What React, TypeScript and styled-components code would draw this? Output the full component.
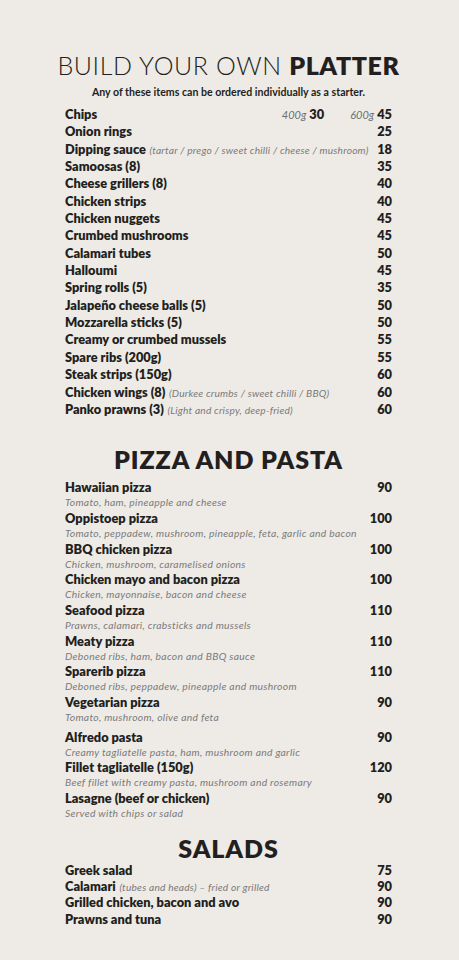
import React from 'react'
import styled, { createGlobalStyle } from 'styled-components'

const GlobalStyle = createGlobalStyle`
  html, body {
    margin: 0;
    padding: 0;
    background: #eeebe6;
  }
  body {
    font-family: Lato, 'Open Sans', sans-serif;
    color: #231f20;
  }
`

const Page = styled.div`
  width: 459px;
  min-height: 960px;
  box-sizing: border-box;
  padding: 50px 67px 0 65px;
  display: flex;
  flex-direction: column;
`

const Title = styled.h1<{ $light?: boolean }>`
  margin: 0 -40px;
  text-align: center;
  font-size: 25px;
  line-height: 30px;
  letter-spacing: ${(p) => (p.$light ? 0.6 : 0.9)}px;
  font-weight: ${(p) => (p.$light ? 300 : 800)};
  white-space: nowrap;

  b {
    font-weight: 800;
  }
`

const Intro = styled.p`
  margin: 6px 0 8px;
  text-align: center;
  font-size: 10.6px;
  font-weight: 700;
`

const List = styled.div<{ $pitch: number; $top?: number }>`
  display: flex;
  flex-direction: column;
  margin-top: ${(p) => p.$top ?? 0}px;

  > div {
    height: ${(p) => p.$pitch}px;
  }
`

const Row = styled.div`
  display: flex;
  align-items: baseline;
  justify-content: space-between;
  gap: 8px;
  font-size: 12.8px;
  line-height: 17px;
  font-weight: 800;
`

const Name = styled.span`
  white-space: nowrap;

  i {
    font-weight: 400;
    font-size: 10.2px;
    letter-spacing: 0.2px;
    color: #7a7a7a;
    margin-left: 1px;
  }
`

const Prices = styled.span`
  display: flex;
  gap: 26px;

  i {
    font-weight: 400;
    font-size: 11px;
    color: #6e6e6e;
    margin-right: 3px;
  }
`

const Dish = styled.div<{ $gap?: boolean }>`
  display: flex;
  flex-direction: column;
  margin-top: ${(p) => (p.$gap ? 4 : 0)}px;
`

const Desc = styled.div`
  font-size: 10.3px;
  line-height: 12px;
  letter-spacing: 0.3px;
  font-style: italic;
  color: #7a7a7a;
  white-space: nowrap;
`

const Section = styled.section<{ $top: number }>`
  margin-top: ${(p) => p.$top}px;
  display: flex;
  flex-direction: column;
`

const platter: [string, string?, string?][] = [
  ['Onion rings', undefined, '25'],
  ['Dipping sauce', '(tartar / prego / sweet chilli / cheese / mushroom)', '18'],
  ['Samoosas (8)', undefined, '35'],
  ['Cheese grillers (8)', undefined, '40'],
  ['Chicken strips', undefined, '40'],
  ['Chicken nuggets', undefined, '45'],
  ['Crumbed mushrooms', undefined, '45'],
  ['Calamari tubes', undefined, '50'],
  ['Halloumi', undefined, '45'],
  ['Spring rolls (5)', undefined, '35'],
  ['Jalapeño cheese balls (5)', undefined, '50'],
  ['Mozzarella sticks (5)', undefined, '50'],
  ['Creamy or crumbed mussels', undefined, '55'],
  ['Spare ribs (200g)', undefined, '55'],
  ['Steak strips (150g)', undefined, '60'],
  ['Chicken wings (8)', '(Durkee crumbs / sweet chilli / BBQ)', '60'],
  ['Panko prawns (3)', '(Light and crispy, deep-fried)', '60'],
]

const pizzas = [
  { name: 'Hawaiian pizza', desc: 'Tomato, ham, pineapple and cheese', price: '90' },
  { name: 'Oppistoep pizza', desc: 'Tomato, peppadew, mushroom, pineapple, feta, garlic and bacon', price: '100' },
  { name: 'BBQ chicken pizza', desc: 'Chicken, mushroom, caramelised onions', price: '100' },
  { name: 'Chicken mayo and bacon pizza', desc: 'Chicken, mayonnaise, bacon and cheese', price: '100' },
  { name: 'Seafood pizza', desc: 'Prawns, calamari, crabsticks and mussels', price: '110' },
  { name: 'Meaty pizza', desc: 'Deboned ribs, ham, bacon and BBQ sauce', price: '110' },
  { name: 'Sparerib pizza', desc: 'Deboned ribs, peppadew, pineapple and mushroom', price: '110' },
  { name: 'Vegetarian pizza', desc: 'Tomato, mushroom, olive and feta', price: '90' },
  { name: 'Alfredo pasta', desc: 'Creamy tagliatelle pasta, ham, mushroom and garlic', price: '90', gap: true },
  { name: 'Fillet tagliatelle (150g)', desc: 'Beef fillet with creamy pasta, mushroom and rosemary', price: '120' },
  { name: 'Lasagne (beef or chicken)', desc: 'Served with chips or salad', price: '90' },
]

const salads: [string, string?, string?][] = [
  ['Greek salad', undefined, '75'],
  ['Calamari', '(tubes and heads) – fried or grilled', '90'],
  ['Grilled chicken, bacon and avo', undefined, '90'],
  ['Prawns and tuna', undefined, '90'],
]

export default function App() {
  return (
    <Page>
      <GlobalStyle />
      <Title $light>
        BUILD YOUR OWN <b>PLATTER</b>
      </Title>
      <Intro>Any of these items can be ordered individually as a starter.</Intro>
      <List $pitch={17.35}>
        <Row>
          <Name>Chips</Name>
          <Prices>
            <span>
              <i>400g</i>30
            </span>
            <span>
              <i>600g</i>45
            </span>
          </Prices>
        </Row>
        {platter.map(([name, note, price]) => (
          <Row key={name}>
            <Name>
              {name}
              {note && <i> {note}</i>}
            </Name>
            <span>{price}</span>
          </Row>
        ))}
      </List>

      <Section $top={26}>
        <Title>PIZZA AND PASTA</Title>
        <List $pitch={30.7} $top={5}>
          {pizzas.map((p) => (
            <Dish key={p.name} $gap={p.gap}>
              <Row>
                <Name>{p.name}</Name>
                <span>{p.price}</span>
              </Row>
              <Desc>{p.desc}</Desc>
            </Dish>
          ))}
        </List>
      </Section>

      <Section $top={12}>
        <Title>SALADS</Title>
        <List $pitch={16.3} $top={-1}>
          {salads.map(([name, note, price]) => (
            <Row key={name}>
              <Name>
                {name}
                {note && <i> {note}</i>}
              </Name>
              <span>{price}</span>
            </Row>
          ))}
        </List>
      </Section>
    </Page>
  )
}
